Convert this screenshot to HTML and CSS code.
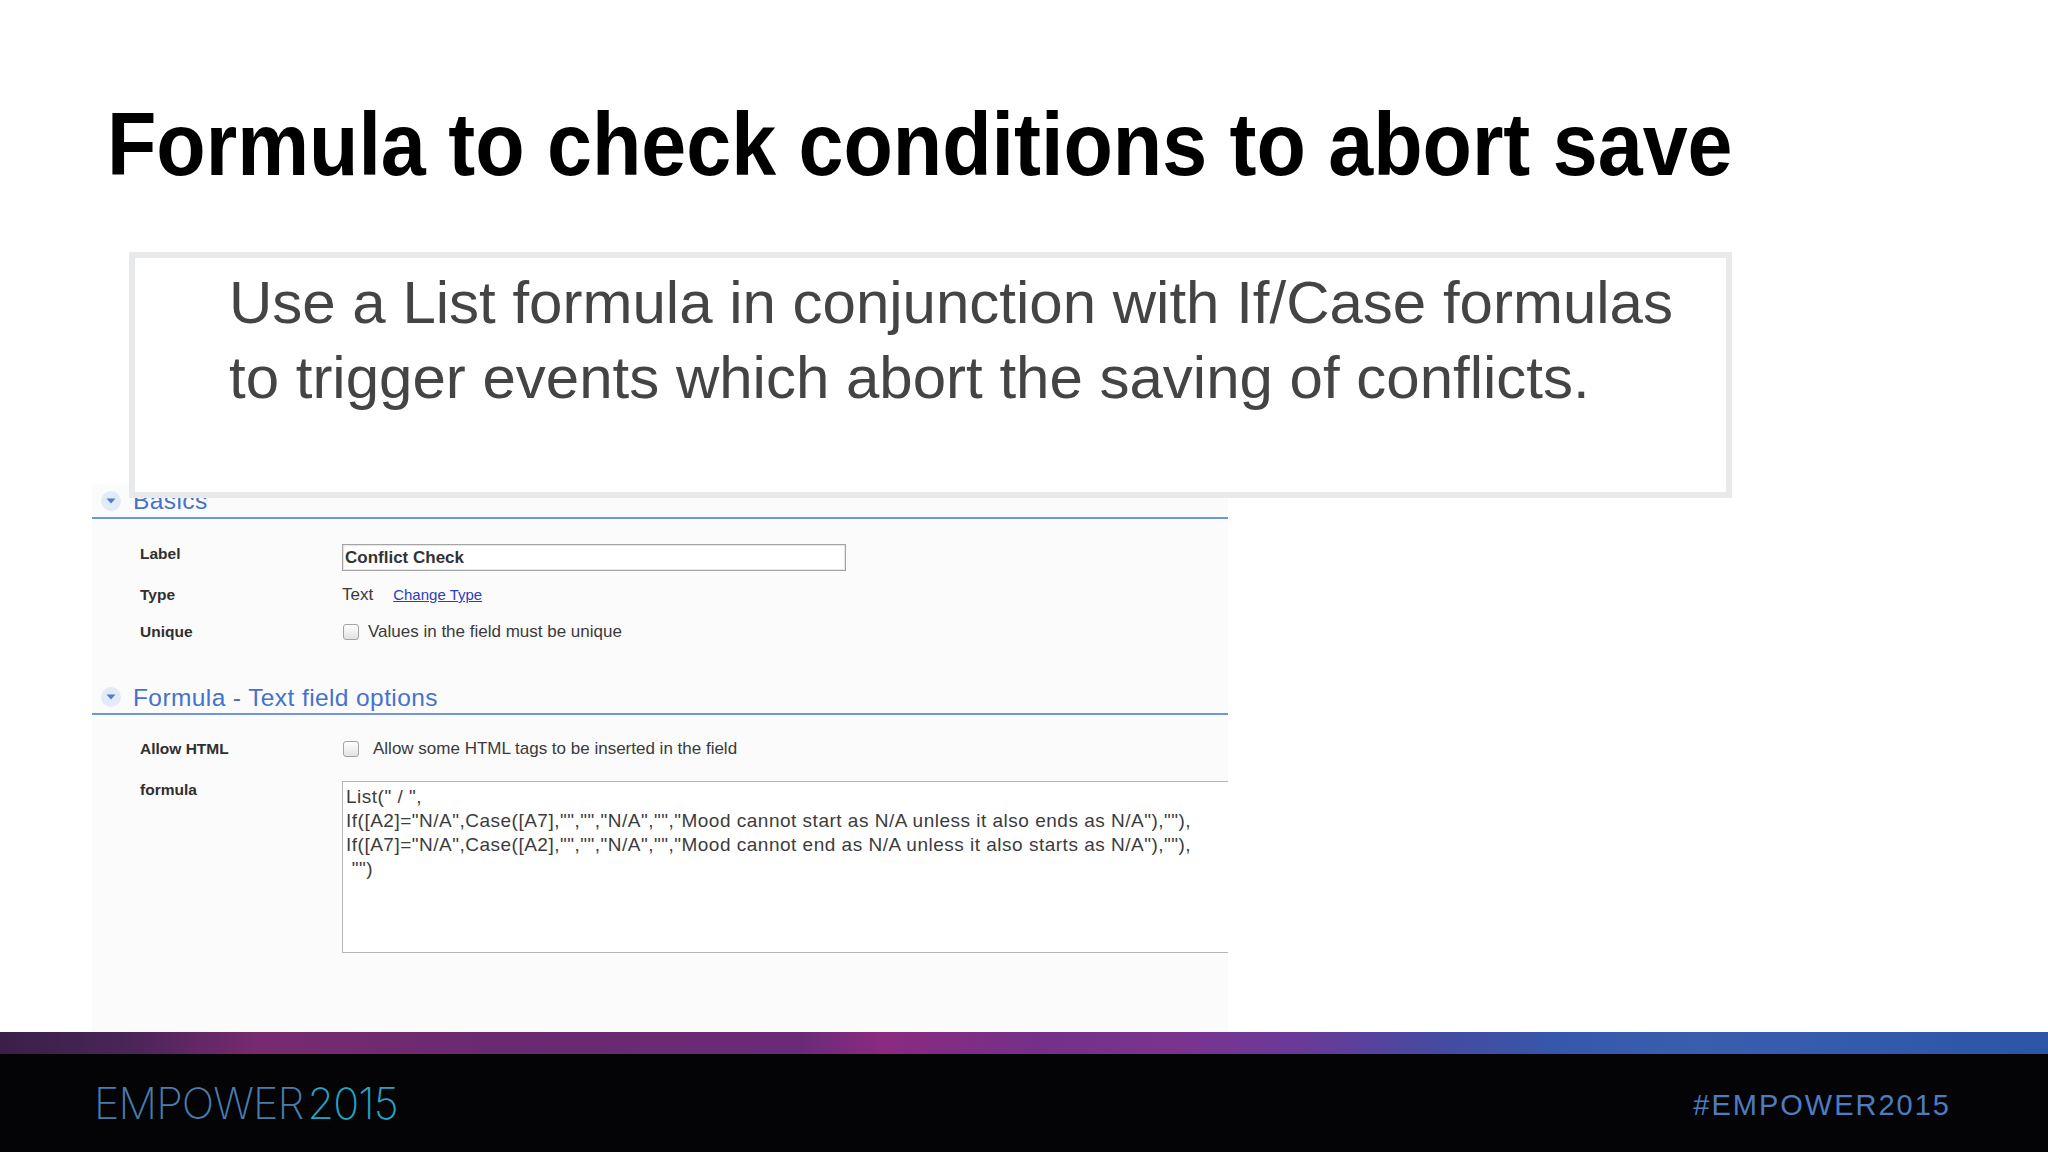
FILE: index.html
```html
<!DOCTYPE html>
<html lang="en">
<head>
<meta charset="utf-8">
<title>Formula to check conditions to abort save</title>
<link rel="stylesheet" href="styles.css">
</head>
<body>
<div class="slide">
  <main class="content">
    <h1 class="title">Formula to check conditions to abort save</h1>
    <div class="callout">
      <p class="callout-text">Use a List formula in conjunction with If/Case formulas<br>to trigger events which abort the saving of conflicts.</p>
    </div>
    <section class="form">
      <div class="sec-head">
        <span class="toggle"><svg width="10" height="6" viewBox="0 0 10 6"><path d="M0.5 0.5h9L5 5.6z" fill="#4f7dcc"/></svg></span>
        <span class="sec-title">Basics</span>
      </div>
      <div class="rows rows-basics">
        <div class="row row-label">
          <div class="lbl">Label</div>
          <div class="val"><div class="input">Conflict Check</div></div>
        </div>
        <div class="row">
          <div class="lbl">Type</div>
          <div class="val"><span class="plain">Text</span><a class="link" href="#">Change Type</a></div>
        </div>
        <div class="row">
          <div class="lbl">Unique</div>
          <div class="val"><span class="check"></span><span class="plain">Values in the field must be unique</span></div>
        </div>
      </div>
      <div class="sec-head sec-formula">
        <span class="toggle"><svg width="10" height="6" viewBox="0 0 10 6"><path d="M0.5 0.5h9L5 5.6z" fill="#4f7dcc"/></svg></span>
        <span class="sec-title">Formula - Text field options</span>
      </div>
      <div class="rows rows-formula">
        <div class="row">
          <div class="lbl">Allow HTML</div>
          <div class="val"><span class="check"></span><span class="plain wide-gap">Allow some HTML tags to be inserted in the field</span></div>
        </div>
        <div class="row row-top">
          <div class="lbl">formula</div>
          <div class="val"><div class="textarea">List(" / ",
If([A2]="N/A",Case([A7],"","","N/A","","Mood cannot start as N/A unless it also ends as N/A"),""),
If([A7]="N/A",Case([A2],"","","N/A","","Mood cannot end as N/A unless it also starts as N/A"),""),
 "")</div></div>
        </div>
      </div>
    </section>
  </main>
  <footer class="footer">
    <div class="stripe"></div>
    <div class="bar">
      <div class="logo"><span class="emp">EMPOWER</span><span class="yr">2015</span></div>
      <div class="hash">#EMPOWER2015</div>
    </div>
  </footer>
</div>
</body>
</html>
```
FILE: styles.css
```css
html, body {
  margin: 0;
  padding: 0;
  background: #ffffff;
}
body {
  width: 2048px;
  height: 1152px;
  overflow: hidden;
  font-family: "Liberation Sans", Arial, sans-serif;
}
.slide {
  width: 2048px;
  height: 1152px;
  display: flex;
  flex-direction: column;
}
.content {
  flex: 1;
  display: flex;
  flex-direction: column;
  padding-top: 100px;
  box-sizing: border-box;
}
.title {
  margin: 0 0 0 107px;
  font-family: "Liberation Sans", Arial, sans-serif;
  font-weight: bold;
  font-size: 89px;
  line-height: 88px;
  letter-spacing: 0;
  color: #000;
  white-space: nowrap;
  transform: scaleX(0.908);
  transform-origin: left center;
}
.callout {
  position: relative;
  z-index: 1;
  margin: 64px 0 0 129px;
  width: 1603px;
  height: 246px;
  box-sizing: border-box;
  border: 6px solid #e8e9ea;
  background: #fff;
  padding: 7px 0 0 94px;
}
.callout-text {
  margin: 0;
  font-family: "Liberation Sans", Arial, sans-serif;
  font-size: 60px;
  line-height: 75px;
  color: #444444;
  white-space: nowrap;
}
.form {
  margin: -14px 0 0 92px;
  width: 1136px;
  flex: 1;
  background: #fbfbfb;
}
.sec-head {
  height: 33px;
  border-bottom: 2px solid #7096da;
  display: flex;
  align-items: center;
}
.toggle {
  width: 20px;
  height: 20px;
  border-radius: 50%;
  background: #e3ebf8;
  margin-left: 9px;
  display: flex;
  align-items: center;
  justify-content: center;
}
.toggle svg { display: block; margin-top: 1px; }
.sec-title {
  margin-left: 12px;
  font-size: 24.5px;
  letter-spacing: 0.4px;
  color: #4472cc;
  line-height: 33px;
}
.sec-formula .sec-title { padding-top: 2px; }
.rows-basics { padding-top: 20px; }
.sec-formula { margin-top: 30px; }
.rows-formula { padding-top: 15px; }
.row {
  height: 37px;
  display: flex;
  align-items: center;
}
.row-label .lbl { padding-bottom: 7px; }
.row-top {
  align-items: flex-start;
  height: auto;
  margin-top: 14px;
}
.lbl {
  width: 202px;
  margin-left: 48px;
  font-weight: bold;
  font-size: 15.5px;
  color: #2f2f2f;
}
.row-top .lbl { line-height: 18px; }
.val {
  display: flex;
  align-items: center;
}
.input {
  width: 504px;
  height: 27px;
  box-sizing: border-box;
  border: 1px solid #a4a4a4;
  box-shadow: inset 0 0 0 1px #e6e6e6;
  background: #fff;
  padding-left: 2px;
  font-weight: bold;
  font-size: 17px;
  line-height: 25px;
  color: #333;
}
.plain {
  font-size: 17px;
  color: #3a3a3a;
}
.link {
  margin-left: 20px;
  font-size: 15px;
  color: #2b3fba;
  text-decoration: underline;
}
.check {
  width: 16px;
  height: 16px;
  box-sizing: border-box;
  border: 1px solid #a3a3a3;
  border-radius: 3px;
  background: linear-gradient(#ffffff, #e2e2e2);
  margin-left: 1px;
  margin-right: 9px;
}
.wide-gap { margin-left: 5px; }
.textarea {
  width: 886px;
  height: 172px;
  box-sizing: border-box;
  border: 1px solid #b5b5b5;
  border-right: none;
  background: #fff;
  padding: 3px 0 0 3px;
  font-size: 19px;
  letter-spacing: 0.5px;
  line-height: 24px;
  color: #3c3c3c;
  white-space: pre;
  overflow: hidden;
}
.footer {
  display: flex;
  flex-direction: column;
}
.stripe {
  height: 22px;
  background: linear-gradient(90deg, #3a1f48 0px, #4a2558 130px, #782a70 260px, #6a2a70 500px, #6a2a78 800px, #8a2a80 880px, #74308a 1050px, #7a3490 1180px, #6a3a98 1300px, #4a48a0 1420px, #3558aa 1560px, #3a5eae 1700px, #2c55a8 2048px);
}
.bar {
  height: 98px;
  background: #040406;
  display: flex;
  align-items: center;
  justify-content: space-between;
  padding: 0 97px 0 94px;
}
.logo {
  font-family: Inter, "Liberation Sans", sans-serif;
  font-weight: 200;
  font-size: 43px;
  line-height: 1;
  letter-spacing: -0.9px;
}
.emp { color: #4a7cae; }
.yr { color: #22a6c8; margin-left: 4px; }
.hash {
  margin-top: 5px;
  font-family: "Liberation Sans", Arial, sans-serif;
  font-size: 29px;
  line-height: 1;
  letter-spacing: 2px;
  color: #4d7cc0;
}
```
